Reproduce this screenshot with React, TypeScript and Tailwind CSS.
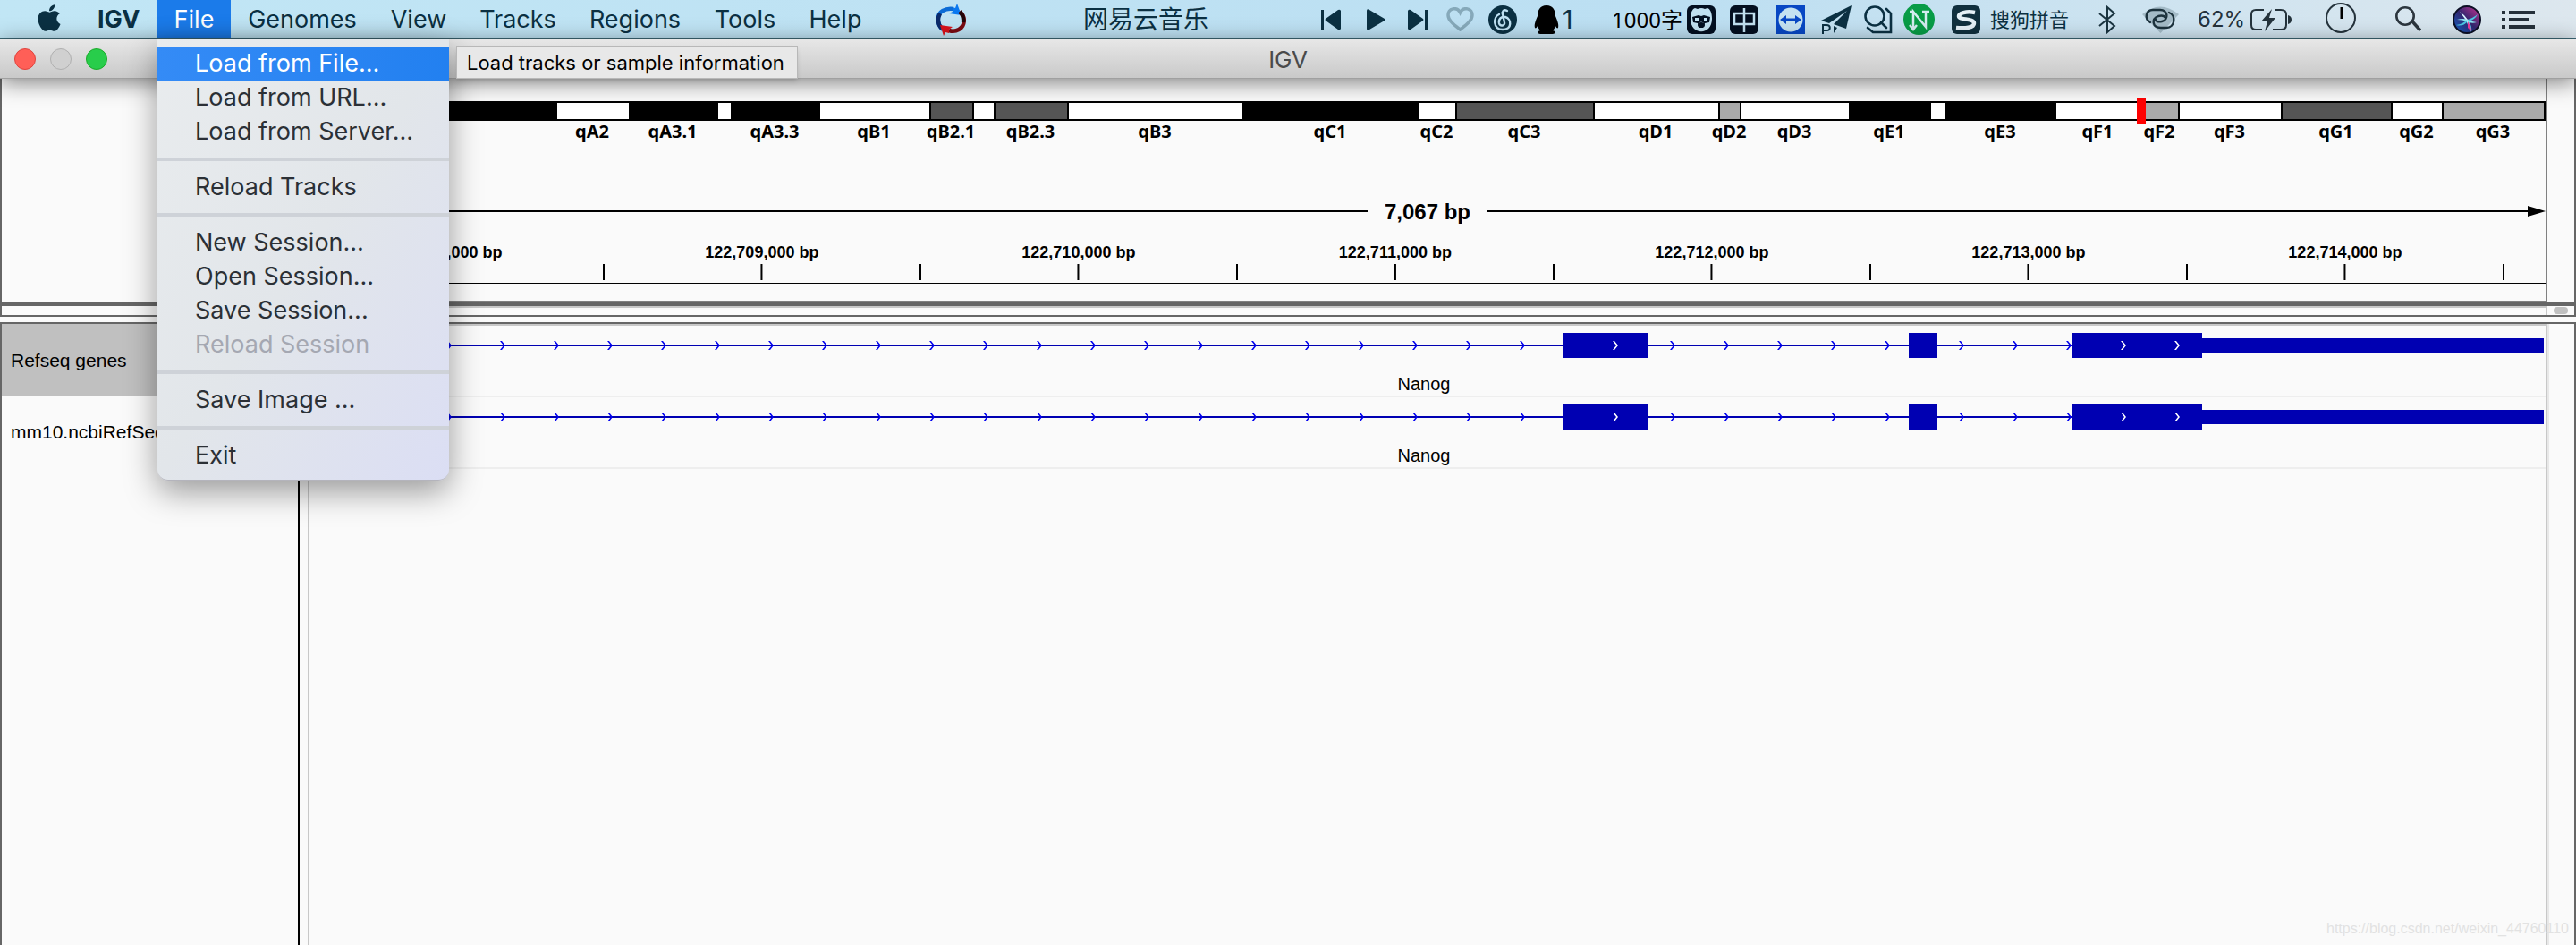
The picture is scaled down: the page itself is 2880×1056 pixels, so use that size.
import { ReactNode } from 'react';
import clsx from 'clsx';
import { FaApple } from 'react-icons/fa';

// Visible region of chr6, in base pairs
const REGION_START = 122707571;
const REGION_LENGTH = 7062;

const menus = [
  { label: 'File', width: 'w-[82px]' },
  { label: 'Genomes', width: 'w-[160px]' },
  { label: 'View', width: 'w-[100px]' },
  { label: 'Tracks', width: 'w-[122px]' },
  { label: 'Regions', width: 'w-[140px]' },
  { label: 'Tools', width: 'w-[106px]' },
  { label: 'Help', width: 'w-[96px]' },
];

const fileMenu = [
  ['Load from File...', 'Load from URL...', 'Load from Server...'],
  ['Reload Tracks'],
  ['New Session...', 'Open Session...', 'Save Session...', 'Reload Session'],
  ['Save Image ...'],
  ['Exit'],
];

interface Band {
  name?: string;
  size: number;
  stain: 'white' | 'light' | 'dark' | 'black';
}

const bands: Band[] = [
  { size: 277, stain: 'black' },
  { name: 'qA2', size: 80, stain: 'white' },
  { name: 'qA3.1', size: 100, stain: 'black' },
  { size: 14, stain: 'white' },
  { name: 'qA3.3', size: 100, stain: 'black' },
  { name: 'qB1', size: 122, stain: 'white' },
  { name: 'qB2.1', size: 50, stain: 'dark' },
  { size: 22, stain: 'white' },
  { name: 'qB2.3', size: 84, stain: 'dark' },
  { name: 'qB3', size: 194, stain: 'white' },
  { name: 'qC1', size: 198, stain: 'black' },
  { name: 'qC2', size: 40, stain: 'white' },
  { name: 'qC3', size: 156, stain: 'dark' },
  { name: 'qD1', size: 138, stain: 'white' },
  { name: 'qD2', size: 26, stain: 'light' },
  { name: 'qD3', size: 120, stain: 'white' },
  { name: 'qE1', size: 92, stain: 'black' },
  { size: 16, stain: 'white' },
  { name: 'qE3', size: 124, stain: 'black' },
  { name: 'qF1', size: 94, stain: 'white' },
  { name: 'qF2', size: 44, stain: 'light' },
  { name: 'qF3', size: 113, stain: 'white' },
  { name: 'qG1', size: 125, stain: 'dark' },
  { name: 'qG2', size: 55, stain: 'white' },
  { name: 'qG3', size: 116, stain: 'light' },
];

const stains = {
  white: 'bg-white',
  light: 'bg-[#aaaaaa] border-x-2 border-black',
  dark: 'bg-[#555555] border-x-2 border-black',
  black: 'bg-black',
};

const ticks = Array.from({ length: 14 }, (_, i) => 122708000 + i * 500);

const exons = [
  { from: 1402, to: 1496 },
  { from: 1788, to: 1820 },
  { from: 1970, to: 2116 },
];
const intronArrows = [
  ...Array.from({ length: 22 }, (_, i) => 99 + i * 60),
  1527, 1587, 1647, 1707, 1767, 1850, 1910, 1970,
];
const exonArrows = [1463, 2031, 2091];

const bpToPercent = (bp: number) => `${((bp - REGION_START) / REGION_LENGTH) * 100}%`;
const trackPercent = (x: number) => `${x / 25}%`;

const Glyph = ({ className, box, children }: { className: string; box: string; children: ReactNode }) => (
  <svg className={clsx('shrink-0', className)} viewBox={box} fill="currentColor" aria-hidden="true">
    {children}
  </svg>
);

const FileMenu = () => (
  <div
    role="menu"
    className="absolute left-0 top-11 z-20 w-[326px] rounded-b-xl border-b border-[#b4b4bc] bg-linear-to-br from-[#e9ecee] via-[#e2e6ea] to-[#dbdef4] py-2 text-[#2b3036] shadow-[0_12px_36px_rgba(0,0,0,0.4)]"
  >
    {fileMenu.map((group, g) => (
      <div key={group[0]}>
        {g > 0 && <hr className="my-[10px] h-1 border-0 bg-[#ced2d8]" />}
        {group.map((label) => (
          <button
            key={label}
            role="menuitem"
            disabled={label === 'Reload Session'}
            className={clsx(
              'block h-[38px] w-full whitespace-nowrap pl-[42px] text-left text-[27px] leading-[38px] disabled:text-[#a5a8b2]',
              label === 'Load from File...' && 'bg-linear-to-r from-[#348bf6] to-[#2280f0] text-white'
            )}
          >
            {label}
          </button>
        ))}
      </div>
    ))}
  </div>
);

const StatusItems = () => (
  <div className="flex h-full items-center text-[#0b3042]">
    <Glyph className="h-9 w-[34px]" box="0 0 34 36">
      <path d="M8 29C1 23 1 12 8 8q5-3 12-2" fill="none" stroke="#0b6bd6" strokeWidth="4.500" />
      <path d="M7 28C2 23 2 16 5 11" fill="none" stroke="#0b2a6a" strokeWidth="4.500" />
      <path d="M24 0l5 13-14-2 4-2V4l3 1z" fill="#0a78f0" />
      <path d="M27 9c7 6 6 16-1 20q-5 3-11 1" fill="none" stroke="#7a0a12" strokeWidth="4.500" />
      <path d="M27 9q5 5 4 12" fill="none" stroke="#22060a" strokeWidth="4.500" />
      <path d="M9 36L5 24l14 2-4 3v4l-4-1z" fill="#d8121c" />
    </Glyph>
    <span className="ml-[131px] w-[140px] text-[28px]">网易云音乐</span>

    {/* Music player controls */}
    <button aria-label="Previous" className="ml-[126px]">
      <Glyph className="h-6 w-[23px]" box="0 0 23 24"><path d="M0 1h3v22H0zM22 2v20q-1 2-3 1L5 13q-1-1 0-2L19 1q2-1 3 1" /></Glyph>
    </button>
    <button aria-label="Play" className="ml-7">
      <Glyph className="h-6 w-[21px]" box="0 0 21 24"><path d="M0 2q0-3 3-1l17 10q1 1 0 2L3 23q-3 2-3-1z" /></Glyph>
    </button>
    <button aria-label="Next" className="ml-6">
      <Glyph className="h-6 w-[23px]" box="0 0 23 24"><path d="M20 1h3v22h-3zM1 2v20q1 2 3 1l14-10q1-1 0-2L4 1Q2 0 1 2" /></Glyph>
    </button>
    <button aria-label="Like" className="ml-[21px] text-[#86a9ba]">
      <Glyph className="h-[27px] w-[31px]" box="0 0 31 27">
        <path d="M15.500 25C9 20 2 15 2 9c0-8 10-10 13.500-3C19 -1 29 1 29 9c0 6-7 11-13.500 16z" fill="none" stroke="currentColor" strokeWidth="3.500" />
      </Glyph>
    </button>
    <Glyph className="ml-4 size-8" box="0 0 32 32">
      <circle cx="16" cy="16" r="16" />
      <path d="M21 6c-4-2-6 1-5 4l2 9c1 4-5 5-6 1-1-5 3-8 7-7 7 2 8 14-3 14C5 27 5 13 12 10" fill="none" stroke="#bfe1f2" strokeWidth="2.400" strokeLinecap="round" />
    </Glyph>
    <Glyph className="ml-[19px] h-8 w-7 text-black" box="0 0 28 32">
      <path d="M14 0c7 0 10 5 10 12 2 5 4 9 3 13-1 1-2 0-3-2-1 3-2 4-3 5 4 1 3 4 0 4H7c-3 0-4-3 0-4-1-1-2-2-3-5-1 2-2 3-3 2-1-4 1-8 3-13C4 5 7 0 14 0" />
    </Glyph>
    <span className="ml-1 w-[18px] text-[28px]">1</span>

    {/* Input method and utilities */}
    <span className="ml-[37px] w-[84px] whitespace-nowrap font-['Noto_Sans','Noto_Sans_CJK_SC',sans-serif] text-[24px] text-black">
      1000字
    </span>
    <Glyph className="size-8 text-[#030f20]" box="0 0 32 32">
      <rect width="32" height="32" rx="6" />
      <path d="M4 15C4 8 6 4 9 3l3 1q4-2 8 0l3-1c3 1 5 5 5 12 0 19-24 19-24 0" fill="#c0e0f0" />
      <path d="M6 13l7-2 3 1 3-1 7 2-1 6-5 1-2 5h-4l-2-5-5-1z" />
      <path d="M9 14h4v3H9zM19 14h4v3h-4zM13 20q3-3 6 0-3 3-6 0" fill="#c0e0f0" />
      <ellipse cx="16" cy="22" rx="4" ry="3" />
    </Glyph>
    <Glyph className="ml-4 size-8 text-[#030f20]" box="0 0 32 32">
      <rect width="32" height="32" rx="6" />
      <path d="M5 9h22v12H5zM16 3v27" fill="none" stroke="#c0e0f0" strokeWidth="2.500" />
    </Glyph>
    <Glyph className="ml-5 size-8" box="0 0 32 32">
      <rect width="32" height="32" fill="#0848c4" />
      <circle cx="16" cy="16" r="13.500" fill="#c4e2f1" />
      <path d="M4 16l7-5v3.500h10V11l7 5-7 5v-3.500H11V21z" fill="#0848c4" />
    </Glyph>
    <Glyph className="ml-[18px] h-8 w-[34px]" box="0 0 34 32">
      <path d="M34 0L0 17l9 3L29 6 14 21l14 5zM14 23v8l4-6z" />
      <path d="M2 32V22h4c5 0 5 6 0 6H2" fill="none" stroke="currentColor" strokeWidth="2" />
    </Glyph>
    <Glyph className="ml-[14px] size-8" box="0 0 32 32">
      <g fill="none" stroke="currentColor" strokeWidth="2.600" strokeLinecap="round">
        <circle cx="12" cy="12" r="10.500" />
        <path d="M19 19l6 6M25 4l5 5v21H10l-6-5" />
      </g>
    </Glyph>
    <Glyph className="ml-3 size-[35px]" box="0 0 35 35">
      <circle cx="17.500" cy="17.500" r="17.500" fill="#089c46" />
      <path d="M11 27V9l14 17V9M7 9h5M21 9h8M7 24l4 5 4-5" fill="none" stroke="#d4ecf0" strokeWidth="2.500" />
    </Glyph>
    <Glyph className="ml-[19px] size-8 text-[#10303e]" box="0 0 32 32">
      <rect width="32" height="32" rx="6" />
      <path d="M26 8C16 6 8 9 8 12c0 5 17 2 17 8 0 5-10 6-20 5" fill="none" stroke="#e4f0f6" strokeWidth="4.500" />
    </Glyph>
    <span className="ml-[11px] w-[88px] whitespace-nowrap text-[22px]">搜狗拼音</span>

    {/* System status */}
    <Glyph className="ml-[33px] h-8 w-5" box="0 0 20 32">
      <path d="M1 9l17 14-8 7V2l8 7L1 23" fill="none" stroke="#1a3440" strokeWidth="2" />
    </Glyph>
    <Glyph className="ml-[29px] h-[30px] w-[41px]" box="0 0 41 30">
      <path d="M0 9Q20-8 41 9L20.500 30z" fill="#a4bbc7" />
      <g fill="none" stroke="#1c323d" strokeWidth="2.400" strokeLinecap="round">
        <path d="M9 18C2 14 4 4 12 4h8c9 0 10 11 2 13-4 1-7 0-7-2" />
        <path d="M30 7c8 3 7 17-3 17h-6c-10 0-11-10-3-13 4-1 7 0 8 2" />
      </g>
    </Glyph>
    <span className="ml-[21px] w-[54px] text-[24px] text-[#25333c]">62%</span>
    <Glyph className="ml-[5px] h-[26px] w-[46px] text-[#25333c]" box="0 0 46 26">
      <path d="M15 2H6Q1 2 1 7v12q0 5 5 5h7M28 2h6q6 0 6 5v12q0 5-6 5h-9" fill="none" stroke="currentColor" strokeWidth="2" />
      <path d="M24 1L12 15h7l-3 11 12-15h-7zM42 8q4 1 4 5t-4 5z" />
    </Glyph>
    <Glyph className="mb-1 ml-[38px] size-[34px] text-[#25333c]" box="0 0 34 34">
      <circle cx="17" cy="17" r="16" fill="none" stroke="currentColor" strokeWidth="2" />
      <path d="M16.500 5h2.500v13h-2.500z" fill="#000" />
    </Glyph>
    <button aria-label="Search" className="ml-[43px] text-[#2c363e]">
      <Glyph className="h-[29px] w-[30px]" box="0 0 30 29">
        <path d="M20 17l9 10" fill="none" stroke="currentColor" strokeWidth="3.400" />
        <circle cx="12" cy="11" r="9.700" fill="none" stroke="currentColor" strokeWidth="2.600" />
      </Glyph>
    </button>
    <Glyph className="ml-[35px] size-8" box="0 0 32 32">
      <defs>
        <linearGradient id="siri" x1="0" y1="1" x2="1" y2="0">
          <stop offset="0" stopColor="#1263cc" />
          <stop offset="0.500" stopColor="#31266e" />
          <stop offset="1" stopColor="#d03594" />
        </linearGradient>
      </defs>
      <circle cx="16" cy="16" r="15" fill="url(#siri)" stroke="#0b0f24" strokeWidth="2" />
      <path d="M4 22q8-1 12-6 6-1 12-6-3 6-10 8 4 5 3 12-3-4-5-11-5 5-12 3" fill="#4cc8e4" />
      <path d="M8 7q6 4 9 9l4 12q-4-5-5-10z" fill="#d9f5ff" />
      <path d="M5 16q7-2 11 0t11 3q-6 2-11-1-5-2-11-2" fill="#8fe6f2" />
      <path d="M17 18q4 6 4 11l-4-4z" fill="#e83a9c" />
    </Glyph>
    <button aria-label="Notifications" className="ml-[23px] mr-[46px] text-[#25303a]">
      <Glyph className="h-5 w-[37px]" box="0 0 37 20">
        <path d="M0 0h4v4H0zM8 0h29v4H8zM0 8h4v4H0zM8 8h23v4H8zM0 16h4v4H0zM8 16h29v4H8z" />
      </Glyph>
    </button>
  </div>
);

const MenuBar = () => (
  <header className="flex h-11 items-center justify-between border-b border-[#3c6876] bg-linear-to-r from-[#c1e6f5] via-[#bcdff2] via-65% to-[#dde7ee] text-[27px] leading-10 text-[#0b3042]">
    <nav className="flex h-full items-center">
      <FaApple className="mb-1 ml-[38px] size-[34px]" />
      <span className="ml-[37px] w-[67px] font-bold">IGV</span>
      {menus.map(({ label, width }) => (
        <div key={label} className="relative h-full">
          <button className={clsx('h-full text-center', width, label === 'File' && 'bg-[#1b7bea] text-white')}>
            {label}
          </button>
          {label === 'File' && (
            <>
              <FileMenu />
              <div
                role="tooltip"
                className="absolute left-[334px] top-[51px] z-20 h-[37px] w-[382px] whitespace-nowrap border border-[#b8b8b8] bg-[#e8e8e8] pl-[11px] text-[22px] leading-[37px] text-black shadow-md"
              >
                Load tracks or sample information
              </div>
            </>
          )}
        </div>
      ))}
    </nav>
    <StatusItems />
  </header>
);

const TitleBar = () => (
  <div className="relative z-10 flex h-11 items-center border-b border-[#a0a0a0] bg-linear-to-b from-[#e7e7e7] to-[#c9c9c9] px-4 shadow-[0_4px_24px_rgba(0,0,0,0.5)]">
    <div className="flex flex-1 gap-4">
      <button aria-label="Close" className="size-6 rounded-full border border-[#e0443e] bg-[#ff5f57]" />
      <button aria-label="Minimize" className="size-6 rounded-full border border-[#b0b0b0] bg-[#d0d0d0]" />
      <button aria-label="Zoom" className="size-6 rounded-full border border-[#1aab29] bg-[#28cd4b]" />
    </div>
    <h1 className="pt-px text-[26px] text-[#4a4a4a]">IGV</h1>
    <div className="flex-1" />
  </div>
);

const Ideogram = () => (
  <div className="relative flex">
    {bands.map(({ name, size, stain }, i) => (
      <div key={i} className="min-w-0 basis-0" style={{ flexGrow: size }}>
        <div className="border-y-2 border-black">
          <div className={clsx('h-[18px]', stains[stain])} />
        </div>
        <div className="flex h-6 justify-center whitespace-nowrap pr-[2px] font-['Noto_Sans'] text-[20px] font-bold leading-6">
          {name}
        </div>
      </div>
    ))}
    {/* Current locus */}
    <div className="absolute -top-1 h-[30px] w-[10px] bg-[#ff0000]" style={{ left: trackPercent(2043) }} />
  </div>
);

const Ruler = () => (
  <div className="mt-[63px]">
    <div className="flex h-7 items-center">
      <div className="h-[2px] flex-1 bg-black" />
      <div className="w-[134px] pt-[2px] text-center text-[24px] font-bold leading-7">7,067 bp</div>
      <div className="flex h-3 flex-1 items-center">
        <div className="h-[2px] flex-1 bg-black" />
        <svg className="h-3 w-5" viewBox="0 0 20 12"><path d="M0 0l20 6L0 12z" /></svg>
      </div>
    </div>
    <div className="relative mt-5 h-[47px] overflow-hidden border-b border-black">
      {ticks.map((bp) => (
        <div
          key={bp}
          className="absolute inset-y-0 flex -translate-x-1/2 flex-col items-center justify-between pb-[3px]"
          style={{ left: bpToPercent(bp) }}
        >
          <span className="h-6 whitespace-nowrap text-[18px] font-bold leading-6">
            {bp % 1000 === 0 && `${bp.toLocaleString('en-US')} bp`}
          </span>
          <span className="h-[18px] w-[2px] bg-black" />
        </div>
      ))}
    </div>
  </div>
);

const Arrow = ({ x, color }: { x: number; color: string }) => (
  <svg x={trackPercent(x)} y="17" overflow="visible">
    <path d="M-6 0h2l4 5-4 5h-2l4-5z" fill={color} />
  </svg>
);

const GeneTrack = () => (
  <div className="h-20 border-b-2 border-[#eeeeee]">
    <svg className="block h-[44px] w-full" role="img" aria-label="Nanog transcript">
      <rect x="0" y="21" width={trackPercent(2300)} height="2" fill="#0000b2" />
      {exons.map(({ from, to }) => (
        <rect key={from} x={trackPercent(from)} y="8" width={trackPercent(to - from)} height="28" fill="#0000b2" />
      ))}
      <rect x={trackPercent(2116)} y="14" width={trackPercent(382)} height="16" fill="#0000b2" />
      {intronArrows.map((x) => <Arrow key={x} x={x} color="#0000f0" />)}
      {exonArrows.map((x) => <Arrow key={x} x={x} color="#ffffff" />)}
    </svg>
    <div className="pr-2 text-center text-[20px] leading-[42px]">Nanog</div>
  </div>
);

const App = () => {
  return (
    <div className="flex min-h-screen flex-col overflow-hidden bg-[#fafafa] font-[Inter,'Noto_Sans_CJK_SC',sans-serif]">
      <MenuBar />
      <TitleBar />

      <main className="flex flex-1 flex-col font-['Liberation_Sans',sans-serif] text-black">
        {/* Header panel: ideogram and ruler */}
        <section className="flex border-x-2 border-b-4 border-[#666666]">
          <div className="w-[344px] shrink-0" />
          <div className="h-[250px] min-w-0 flex-1 border-b-2 border-r-2 border-[#808080] pt-[25px]">
            <Ideogram />
            <Ruler />
          </div>
          <div className="w-[30px] shrink-0" />
        </section>

        {/* Collapsed data panel */}
        <section className="flex h-3 border-x-2 border-b-2 border-[#666666]">
          <div className="w-[344px] shrink-0" />
          <div className="flex-1 border-r-2 border-t-2 border-[#c8c8c8]" />
          <div className="flex w-[30px] shrink-0 justify-center pt-px">
            <div className="h-2 w-4 rounded-full bg-[#c0c0c0]" />
          </div>
        </section>

        {/* Feature panel */}
        <section className="mt-[6px] flex flex-1 border-x-2 border-t-2 border-[#666666]">
          <div className="w-[333px] shrink-0 overflow-hidden border-r-2 border-black text-[21px]">
            <div className="h-20 truncate bg-[#c0c0c0] pl-[10px] leading-[82px]">Refseq genes</div>
            <div className="h-20 truncate pl-[10px] leading-[82px]">mm10.ncbiRefSeq.ncbiGene</div>
          </div>
          <div className="ml-[9px] min-w-0 flex-1 border-x-2 border-t-2 border-[#c8c8c8]">
            <GeneTrack />
            <GeneTrack />
          </div>
          <div className="flex w-[30px] shrink-0 items-end justify-end border-l-2 border-[#e8e8e8] pb-[6px]">
            <span className="z-10 mr-[6px] whitespace-nowrap text-[16px] text-[#e2e2e2]">
              https://blog.csdn.net/weixin_44760110
            </span>
          </div>
        </section>
      </main>
    </div>
  );
};

export default App;
